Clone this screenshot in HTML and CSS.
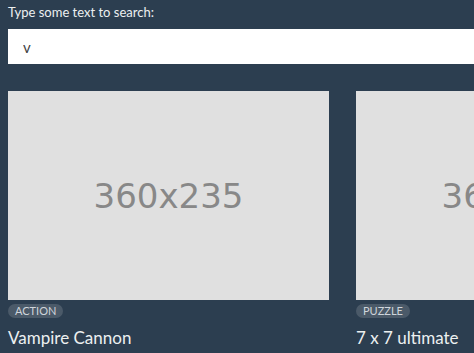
FILE: index.html
```html
<!DOCTYPE html>
<html>
<head>
<meta charset="utf-8">
<link rel="stylesheet" href="styles.css">
</head>
<body>
<div class="page">
  <label class="search-label" for="q">Type some text to search:</label>
  <input id="q" class="search-input" type="text" value="v" autofocus>
  <div class="cards">
    <div class="card">
      <div class="thumb">360x235</div>
      <span class="tag">ACTION</span>
      <div class="title">Vampire Cannon</div>
    </div>
    <div class="card">
      <div class="thumb">360x235</div>
      <span class="tag">PUZZLE</span>
      <div class="title">7 x 7 ultimate</div>
    </div>
  </div>
</div>
</body>
</html>
```
FILE: styles.css
```css
html, body {
  margin: 0;
  padding: 0;
  background: #2c3e50;
  overflow: clip;
}
.page {
  padding: 3px 0 0 8px;
  font-family: Lato, "Open Sans", sans-serif;
  color: #ecf0f1;
  overflow: clip;
  height: 353px;
  box-sizing: border-box;
}
.search-label {
  display: block;
  font-size: 13px;
  line-height: 18px;
  height: 26px;
}
.search-input {
  display: block;
  box-sizing: border-box;
  width: 700px;
  height: 35px;
  margin: 0;
  border: none;
  outline: none;
  padding: 0 14px 0 15px;
  font-family: Lato, sans-serif;
  font-size: 15px;
  color: #444;
  caret-color: #333;
  background: #fff;
}
.cards {
  display: flex;
  gap: 27px;
  margin-top: 27px;
}
.card {
  flex: 0 0 321px;
  display: flex;
  flex-direction: column;
  align-items: flex-start;
}
.thumb {
  width: 321px;
  height: 209px;
  background: #e0e0e0;
  color: #888;
  font-family: "DejaVu Sans", sans-serif;
  font-size: 34px;
  display: flex;
  align-items: center;
  justify-content: center;
}
.tag {
  margin-top: 4px;
  height: 14px;
  line-height: 14px;
  padding: 0 7px;
  border-radius: 7px;
  background: #4b5a69;
  color: #cfd5db;
  font-size: 11px;
}
.title {
  margin-top: 9px;
  font-size: 17px;
  line-height: 21px;
}
```
